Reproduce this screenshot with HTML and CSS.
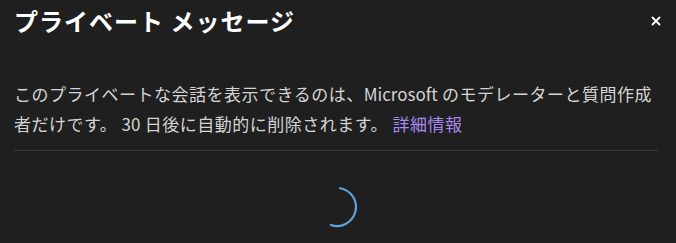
FILE: index.html
```html
<!DOCTYPE html>
<html lang="ja">
<head>
<meta charset="utf-8">
<link rel="stylesheet" href="styles.css">
</head>
<body>
<div class="dialog">
  <div class="header">
    <h1 class="title">プライベート メッセージ</h1>
    <button class="close" aria-label="閉じる">
      <svg width="10" height="10" viewBox="0 0 10 10"><path d="M1 1L9 9M9 1L1 9" stroke="#ffffff" stroke-width="1.8" fill="none"/></svg>
    </button>
  </div>
  <p class="body">このプライベートな会話を表示できるのは、<span class="latin">Microsoft</span> のモデレーターと質問作成者だけです。 <span class="latin">30</span> 日後に自動的に削除されます。 <a class="link" href="#">詳細情報</a></p>
  <div class="divider"></div>
  <div class="spinner-wrap">
    <svg class="spinner" width="44" height="44" viewBox="0 0 44 44">
      <path d="M24.97 3.23 A19 19 0 1 1 15.81 39.96" stroke="#5ea2d8" stroke-width="2.2" fill="none" stroke-linecap="round"/>
    </svg>
  </div>
</div>
</body>
</html>
```
FILE: styles.css
```css
html, body {
  margin: 0;
  padding: 0;
  background: #1f1f1f;
}
.dialog {
  width: 676px;
  height: 243px;
  box-sizing: border-box;
  padding: 0 14px 0 14px;
  font-family: "Noto Sans CJK JP", "Noto Sans", sans-serif;
  color: #d4d4d4;
}
.header {
  display: flex;
  justify-content: space-between;
  align-items: flex-start;
  height: 52px;
}
.title {
  margin: 4px 0 0 0;
  font-size: 24px;
  letter-spacing: 1px;
  font-weight: 700;
  color: #ffffff;
  line-height: 34px;
}
.close {
  background: none;
  border: none;
  padding: 0;
  margin: 16px 1px 0 0;
  width: 10px;
  height: 10px;
  display: flex;
}
.body {
  margin: 27px 0 0 0;
  font-size: 17px;
  letter-spacing: 0.5px;
  line-height: 30px;
  width: 650px;
}
.latin {
  letter-spacing: 0;
}
.link {
  color: #a688f0;
  text-decoration: none;
}
.divider {
  margin-top: 11px;
  height: 1px;
  background: #3a3a3a;
  width: 644px;
}
.spinner-wrap {
  display: flex;
  justify-content: center;
  padding-top: 34px;
  padding-right: 2px;
}
```
